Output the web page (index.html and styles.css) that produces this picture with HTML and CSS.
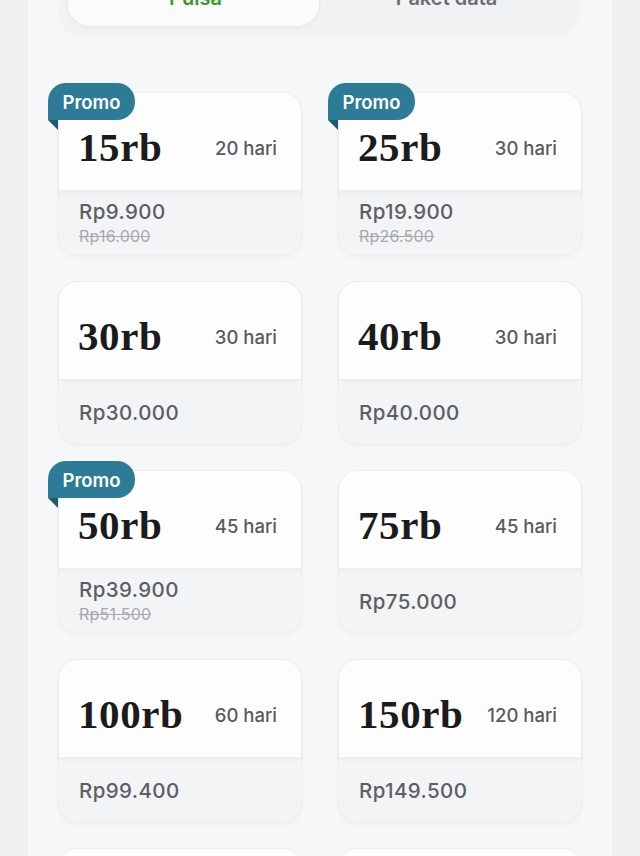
FILE: index.html
```html
<!DOCTYPE html>
<html lang="id">
<head>
<meta charset="utf-8">
<link rel="stylesheet" href="styles.css">
</head>
<body>
<div class="panel">
  <div class="tabs">
    <div class="tab tab-active">Pulsa</div>
    <div class="tab">Paket data</div>
  </div>
  <div class="grid">
    <div class="card">
      <span class="badge">Promo</span>
      <div class="card-top"><span class="amount">15rb</span><span class="days">20 hari</span></div>
      <div class="card-bottom"><span class="price">Rp9.900</span><s class="old">Rp16.000</s></div>
    </div>
    <div class="card">
      <span class="badge">Promo</span>
      <div class="card-top"><span class="amount">25rb</span><span class="days">30 hari</span></div>
      <div class="card-bottom"><span class="price">Rp19.900</span><s class="old">Rp26.500</s></div>
    </div>
    <div class="card">
      <div class="card-top"><span class="amount">30rb</span><span class="days">30 hari</span></div>
      <div class="card-bottom"><span class="price">Rp30.000</span></div>
    </div>
    <div class="card">
      <div class="card-top"><span class="amount">40rb</span><span class="days">30 hari</span></div>
      <div class="card-bottom"><span class="price">Rp40.000</span></div>
    </div>
    <div class="card">
      <span class="badge">Promo</span>
      <div class="card-top"><span class="amount">50rb</span><span class="days">45 hari</span></div>
      <div class="card-bottom"><span class="price">Rp39.900</span><s class="old">Rp51.500</s></div>
    </div>
    <div class="card">
      <div class="card-top"><span class="amount">75rb</span><span class="days">45 hari</span></div>
      <div class="card-bottom"><span class="price">Rp75.000</span></div>
    </div>
    <div class="card">
      <div class="card-top"><span class="amount">100rb</span><span class="days">60 hari</span></div>
      <div class="card-bottom"><span class="price">Rp99.400</span></div>
    </div>
    <div class="card">
      <div class="card-top"><span class="amount">150rb</span><span class="days">120 hari</span></div>
      <div class="card-bottom"><span class="price">Rp149.500</span></div>
    </div>
    <div class="card">
      <div class="card-top"><span class="amount">200rb</span><span class="days">120 hari</span></div>
      <div class="card-bottom"><span class="price">Rp199.000</span></div>
    </div>
    <div class="card">
      <div class="card-top"><span class="amount">300rb</span><span class="days">180 hari</span></div>
      <div class="card-bottom"><span class="price">Rp298.000</span></div>
    </div>
  </div>
</div>
</body>
</html>
```

FILE: styles.css
```css
html, body {
  margin: 0;
  padding: 0;
}
body {
  background: #eef0f2;
  font-family: "Inter", "Liberation Sans", sans-serif;
  height: 856px;
  overflow: hidden;
}
.panel {
  margin: 0 28px;
  background: #f6f7f9;
  padding: 0 30px;
  height: 856px;
  overflow: hidden;
}
.tabs {
  margin-top: -44px;
  margin-right: 2px;
  height: 60px;
  padding: 10px;
  background: #f1f2f4;
  border-radius: 0 0 26px 26px;
  display: flex;
  box-shadow: 0 2px 4px rgba(0,0,0,0.02);
}
.tab {
  flex: 1;
  display: flex;
  align-items: center;
  justify-content: center;
  font-size: 20px;
  font-weight: 600;
  color: #6a6d71;
  padding-top: 4px;
  padding-left: 4px;
}
.tab-active {
  background: #fbfbfc;
  border-radius: 22px;
  color: #3a9a26;
  box-shadow: 0 1px 4px rgba(0,0,0,0.06);
}
.grid {
  margin-top: 56px;
  display: grid;
  grid-template-columns: 244px 244px;
  column-gap: 36px;
  row-gap: 25px;
}
.card {
  position: relative;
  height: 164px;
  border-radius: 20px;
  background: #f3f4f6;
  border: 1px solid #eceef0;
  box-sizing: border-box;
  box-shadow: 0 2px 6px rgba(0,0,0,0.03);
  display: flex;
  flex-direction: column;
  overflow: visible;
}
.card-top {
  height: 97px;
  flex: none;
  background: #fdfdfd;
  border-radius: 19px 19px 0 0;
  box-shadow: 0 3px 4px rgba(0,0,0,0.035);
  display: flex;
  align-items: center;
  justify-content: space-between;
  padding: 10px 24px 0 19px;
  box-sizing: border-box;
  position: relative;
}
.amount {
  font-family: "Liberation Serif", serif;
  font-weight: 700;
  font-size: 41px;
  color: #1b1b1c;
  letter-spacing: 0.6px;
}
.days {
  font-size: 18.5px;
  font-weight: 500;
  color: #585b60;
  padding-top: 2px;
}
.card-bottom {
  flex: 1;
  display: flex;
  flex-direction: column;
  justify-content: center;
  padding: 3px 20px 0;
}
.price {
  font-size: 20.5px;
  font-weight: 500;
  color: #5b5f64;
  line-height: 24px;
  letter-spacing: 0.4px;
}
.old {
  font-size: 16px;
  color: #a6a9ad;
  line-height: 24px;
  letter-spacing: 0.2px;
}
.badge {
  position: absolute;
  top: -10px;
  left: -11px;
  z-index: 2;
  width: 87px;
  height: 37px;
  box-sizing: border-box;
  background: #2e7b97;
  color: #fff;
  font-size: 18.5px;
  font-weight: 600;
  display: flex;
  align-items: center;
  justify-content: center;
  border-radius: 18px 18px 18px 0;
}
.badge::after {
  content: "";
  position: absolute;
  left: 0;
  top: 37px;
  width: 0;
  height: 0;
  border-top: 10px solid #1f5a70;
  border-left: 10px solid transparent;
}
```
